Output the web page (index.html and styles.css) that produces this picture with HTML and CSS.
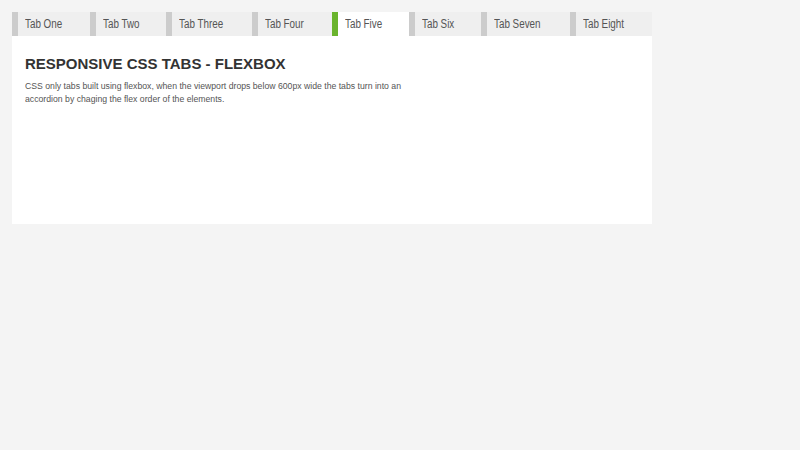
FILE: index.html
```html
<!DOCTYPE html>
<html>
<head>
<meta charset="utf-8">
<link rel="stylesheet" href="styles.css">
</head>
<body>
<div class="tabs">
  <div class="tab"><span class="label">Tab One</span></div>
  <div class="tab"><span class="label">Tab Two</span></div>
  <div class="tab"><span class="label">Tab Three</span></div>
  <div class="tab"><span class="label">Tab Four</span></div>
  <div class="tab active"><span class="label">Tab Five</span></div>
  <div class="tab"><span class="label">Tab Six</span></div>
  <div class="tab"><span class="label">Tab Seven</span></div>
  <div class="tab"><span class="label">Tab Eight</span></div>
  <div class="panel">
    <h1 class="title">RESPONSIVE CSS TABS - FLEXBOX</h1>
    <p class="desc">CSS only tabs built using flexbox, when the viewport drops below 600px wide the tabs turn into an accordion by chaging the flex order of the elements.</p>
  </div>
</div>
</body>
</html>
```
FILE: styles.css
```css
html, body {
  margin: 0;
  background: #f4f4f4;
  font-family: "Liberation Sans", Arial, sans-serif;
}
body {
  padding: 12px;
}
.tabs {
  width: 640px;
  display: flex;
  flex-wrap: wrap;
}
.tab {
  flex: 1 1 auto;
  background: #efefef;
  border-left: 6px solid #cccccc;
  padding: 0 7px;
  height: 24px;
  line-height: 25px;
  font-size: 12.3px;
  color: #555;
  box-sizing: border-box;
  white-space: nowrap;
}
.label {
  display: inline-block;
  transform: scaleX(0.8);
  transform-origin: left center;
}
.tab.active {
  background: #fff;
  border-left-color: #6ab42d;
}
.panel {
  flex-basis: 100%;
  background: #fff;
  height: 188px;
  padding: 17px 13px;
  box-sizing: border-box;
}
.title {
  margin: 0 0 4px;
  font-size: 15px;
  font-weight: bold;
  color: #333;
  line-height: 22px;
}
.desc {
  margin: 0;
  font-size: 9.6px;
  line-height: 13px;
  color: #555;
  width: 426px;
  transform: scaleX(0.905);
  transform-origin: left top;
}
```
